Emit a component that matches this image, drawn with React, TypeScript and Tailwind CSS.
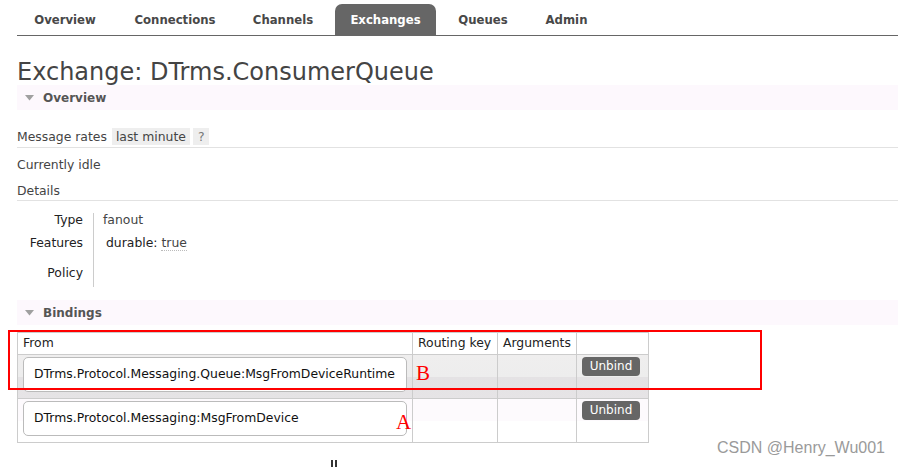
import React from "react";

const tabs = [
  { label: "Overview", w: "w-[96px]" },
  { label: "Connections", w: "w-[112px]" },
  { label: "Channels", w: "w-[92px]" },
  { label: "Exchanges", w: "w-[101px]", active: true },
  { label: "Queues", w: "w-[82px]" },
  { label: "Admin", w: "w-[73px]" },
];

function SectionHeader({ title }: { title: string }) {
  return (
    <div className="h-[25px] bg-[#fdf8fd] flex items-center pl-[8px] gap-[9px]">
      <svg width="9" height="6" viewBox="0 0 9 6" className="mt-[1px]">
        <path d="M0 0 L9 0 L4.5 5.5 Z" fill="#a0a0a0" />
      </svg>
      <span className="font-bold text-[12px] text-[#555]">{title}</span>
    </div>
  );
}

export default function App() {
  return (
    <div
      className="relative w-[898px] h-[467px] overflow-hidden bg-white text-[12.4px] text-[#444]"
      style={{ fontFamily: '"DejaVu Sans", Verdana, sans-serif' }}
    >
      <div className="pl-[17px]">
        {/* nav */}
        <div className="pt-[4px] flex gap-[6px] border-b border-[#666] h-[36px]">
          {tabs.map((t) => (
            <div
              key={t.label}
              className={`${t.w} h-[31px] pt-[2px] flex items-center justify-center font-bold text-[11.7px] ${
                t.active ? "bg-[#666] text-white rounded-t-[7px]" : "text-[#484848]"
              }`}
            >
              {t.label}
            </div>
          ))}
        </div>

        {/* title */}
        <h1 className="mt-[24px] h-[25px] leading-[25px] text-[24px] text-[#444] font-normal whitespace-nowrap">
          Exchange: DTrms.ConsumerQueue
        </h1>

        <SectionHeader title="Overview" />

        <div className="mt-[18px] h-[20px] border-b border-[#e2e2e2] flex items-start">
          <span className="leading-[17px] text-[#444]">Message rates</span>
          <span className="ml-[5px] h-[17px] leading-[17px] px-[4px] bg-[#eeeeee] text-[#444]">last minute</span>
          <span className="ml-[3px] h-[17px] leading-[17px] px-[5px] bg-[#eeeeee] text-[#777]">?</span>
        </div>

        <div className="mt-[9px] leading-[16px] text-[#444]">Currently idle</div>

        <div className="mt-[10px] h-[18px] leading-[16px] border-b border-[#e2e2e2] text-[#444]">Details</div>

        <div className="mt-[9px] flex">
          <div className="w-[66px] flex flex-col items-end text-[#222]">
            <div className="h-[20px] leading-[20px]">Type</div>
            <div className="h-[26px] leading-[26px]">Features</div>
            <div className="h-[34px] leading-[34px]">Policy</div>
          </div>
          <div className="ml-[10px] my-[3px] w-px bg-[#cccccc]" />
          <div className="pl-[9px] flex flex-col text-[#444]">
            <div className="h-[20px] leading-[20px]">fanout</div>
            <div className="h-[26px] leading-[26px] pl-[3px]">
              <span className="text-[#222]">durable:</span>{" "}
              <span className="border-b border-dotted border-[#bbb]">true</span>
            </div>
            <div className="h-[34px]" />
          </div>
        </div>

        <div className="mt-[10px]">
          <SectionHeader title="Bindings" />
        </div>

        <table className="mt-[7px] table-fixed border-collapse w-[631px]">
          <colgroup>
            <col className="w-[395px]" />
            <col className="w-[85px]" />
            <col className="w-[79px]" />
            <col className="w-[72px]" />
          </colgroup>
          <thead>
            <tr className="h-[22px]">
              {["From", "Routing key", "Arguments", ""].map((h, i) => (
                <th
                  key={i}
                  className="border border-[#cccccc] text-left font-normal px-[5px] text-[#222] whitespace-nowrap"
                >
                  {h}
                </th>
              ))}
            </tr>
          </thead>
          <tbody>
            {[
              {
                name: "DTrms.Protocol.Messaging.Queue:MsgFromDeviceRuntime",
                bg: "bg-[linear-gradient(#efeeee_0%,#ededed_50%,#e4e2e4_50%,#e6e4e6_100%)]",
              },
              {
                name: "DTrms.Protocol.Messaging:MsgFromDevice",
                bg: "bg-[linear-gradient(#fdfafd_0%,#fdfafd_50%,#ffffff_50%,#ffffff_100%)]",
              },
            ].map((r) => (
              <tr key={r.name} className={`h-[44px] ${r.bg}`}>
                <td className="border border-[#cccccc] align-top pt-[2px] pl-[5px]">
                  <div className="w-[384px] h-[35px] border border-[#bbbbbb] rounded-[5px] bg-white flex items-center pl-[10px] text-[#111] whitespace-nowrap">
                    {r.name}
                  </div>
                </td>
                <td className="border border-[#cccccc]" />
                <td className="border border-[#cccccc]" />
                <td className="border border-[#cccccc] align-top pt-[2px] pl-[5px]">
                  <div className="w-[58px] h-[19px] rounded-[4px] bg-[#666] text-white text-[12px] flex items-center justify-center leading-[19px]">
                    Unbind
                  </div>
                </td>
              </tr>
            ))}
          </tbody>
        </table>
      </div>

      {/* annotations */}
      <div className="absolute left-[8px] top-[330px] w-[754px] h-[60px] border-2 border-[#ff0000]" />
      <div
        className="absolute left-[416px] top-[361px] text-[21px] leading-[24px] text-[#ff0000]"
        style={{ fontFamily: '"Liberation Serif", serif' }}
      >
        B
      </div>
      <div
        className="absolute left-[396px] top-[410px] text-[21px] leading-[24px] text-[#ff0000]"
        style={{ fontFamily: '"Liberation Serif", serif' }}
      >
        A
      </div>
      <div
        className="absolute left-[717px] top-[438px] text-[16px] leading-[20px] text-[#9a9a9a]"
        style={{ fontFamily: '"Liberation Sans", Arial, sans-serif' }}
      >
        CSDN @Henry_Wu001
      </div>
      <div className="absolute left-[331px] top-[460px] flex gap-[2px]">
        <div className="w-[2px] h-[7px] bg-[#333]" />
        <div className="w-[2px] h-[7px] bg-[#333]" />
      </div>
    </div>
  );
}
